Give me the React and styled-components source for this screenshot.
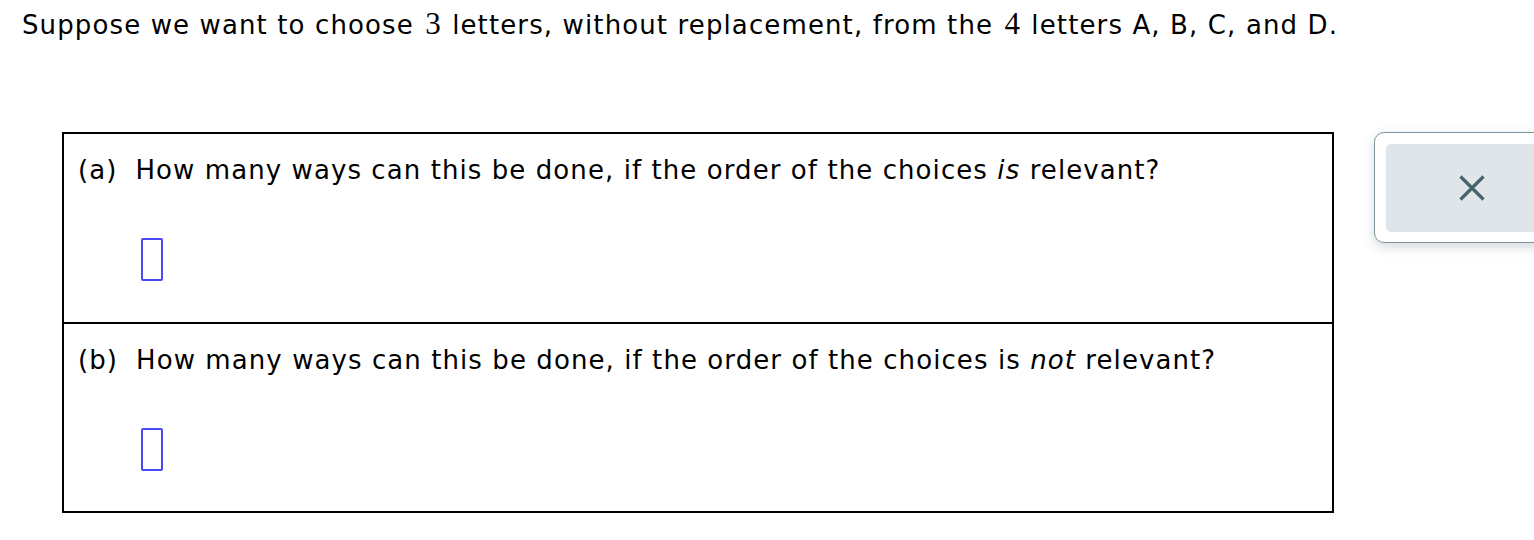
import React from "react";
import styled, { createGlobalStyle } from "styled-components";

const Global = createGlobalStyle`
  html, body { margin: 0; padding: 0; background: #fff; overflow: hidden; }
  body { font-family: "DejaVu Sans", Verdana, sans-serif; color: #000; }
`;

const Page = styled.div`
  width: 1534px;
  height: 540px;
  padding: 10px 0 0 22px;
  box-sizing: border-box;
`;

const Intro = styled.p`
  margin: 0;
  font-size: 26px;
  line-height: 30px;
  letter-spacing: 1.12px;
  white-space: nowrap;
`;

const MathNum = styled.span`
  font-family: "Liberation Serif", "Times New Roman", serif;
  font-size: 31px;
  line-height: 0;
  letter-spacing: 0;
  margin: 0 2px;
`;

const Body = styled.div`
  display: flex;
  align-items: flex-start;
  margin-top: 92px;
  margin-left: 40px;
  gap: 40px;
`;

const Table = styled.div`
  flex: none;
  width: 1272px;
  box-sizing: border-box;
  border: 2px solid #000;
  display: flex;
  flex-direction: column;
`;

const Row = styled.div`
  height: ${(p) => p.$h}px;
  box-sizing: border-box;
  padding: 21px 0 0 14px;
  border-top: ${(p) => (p.$first ? "none" : "2px solid #000")};
`;

const Question = styled.div`
  font-size: 26px;
  line-height: 30px;
  letter-spacing: 1.08px;
  white-space: nowrap;
`;

const Label = styled.span`
  display: inline-block;
  margin-right: 18px;
`;

const AnswerBox = styled.div`
  width: 22px;
  height: 43px;
  box-sizing: border-box;
  border: 2px solid #4a4af5;
  border-radius: 2px;
  margin: 53px 0 0 63px;
`;

const Tools = styled.div`
  flex: none;
  width: 195px;
  height: 111px;
  box-sizing: border-box;
  border: 1.5px solid #7f959e;
  border-radius: 10px;
  background: #fff;
  padding: 10.5px;
  box-shadow: 0 4px 12px rgba(110, 130, 140, 0.3);
`;

const ClearButton = styled.button`
  width: 100%;
  height: 100%;
  border: none;
  border-radius: 5px;
  background: #dfe5e8;
  display: flex;
  align-items: center;
  justify-content: center;
  padding: 0;
  cursor: pointer;
`;

const XIcon = () => (
  <svg width="26" height="26" viewBox="0 0 26 26">
    <path d="M1.5 1.5 L24.5 24.5 M24.5 1.5 L1.5 24.5" stroke="#47636e" strokeWidth="3.2" />
  </svg>
);

export default function App() {
  return (
    <Page>
      <Global />
      <Intro>
        Suppose we want to choose <MathNum>3</MathNum> letters, without
        replacement, from the <MathNum>4</MathNum> letters A, B, C, and D.
      </Intro>
      <Body>
        <Table>
          <Row $first $h={188}>
            <Question>
              <Label>(a)</Label>How many ways can this be done, if the order of
              the choices <i>is</i> relevant?
            </Question>
            <AnswerBox />
          </Row>
          <Row $h={189}>
            <Question>
              <Label>(b)</Label>How many ways can this be done, if the order of
              the choices is <i>not</i> relevant?
            </Question>
            <AnswerBox />
          </Row>
        </Table>
        <Tools>
          <ClearButton aria-label="Clear">
            <XIcon />
          </ClearButton>
        </Tools>
      </Body>
    </Page>
  );
}
